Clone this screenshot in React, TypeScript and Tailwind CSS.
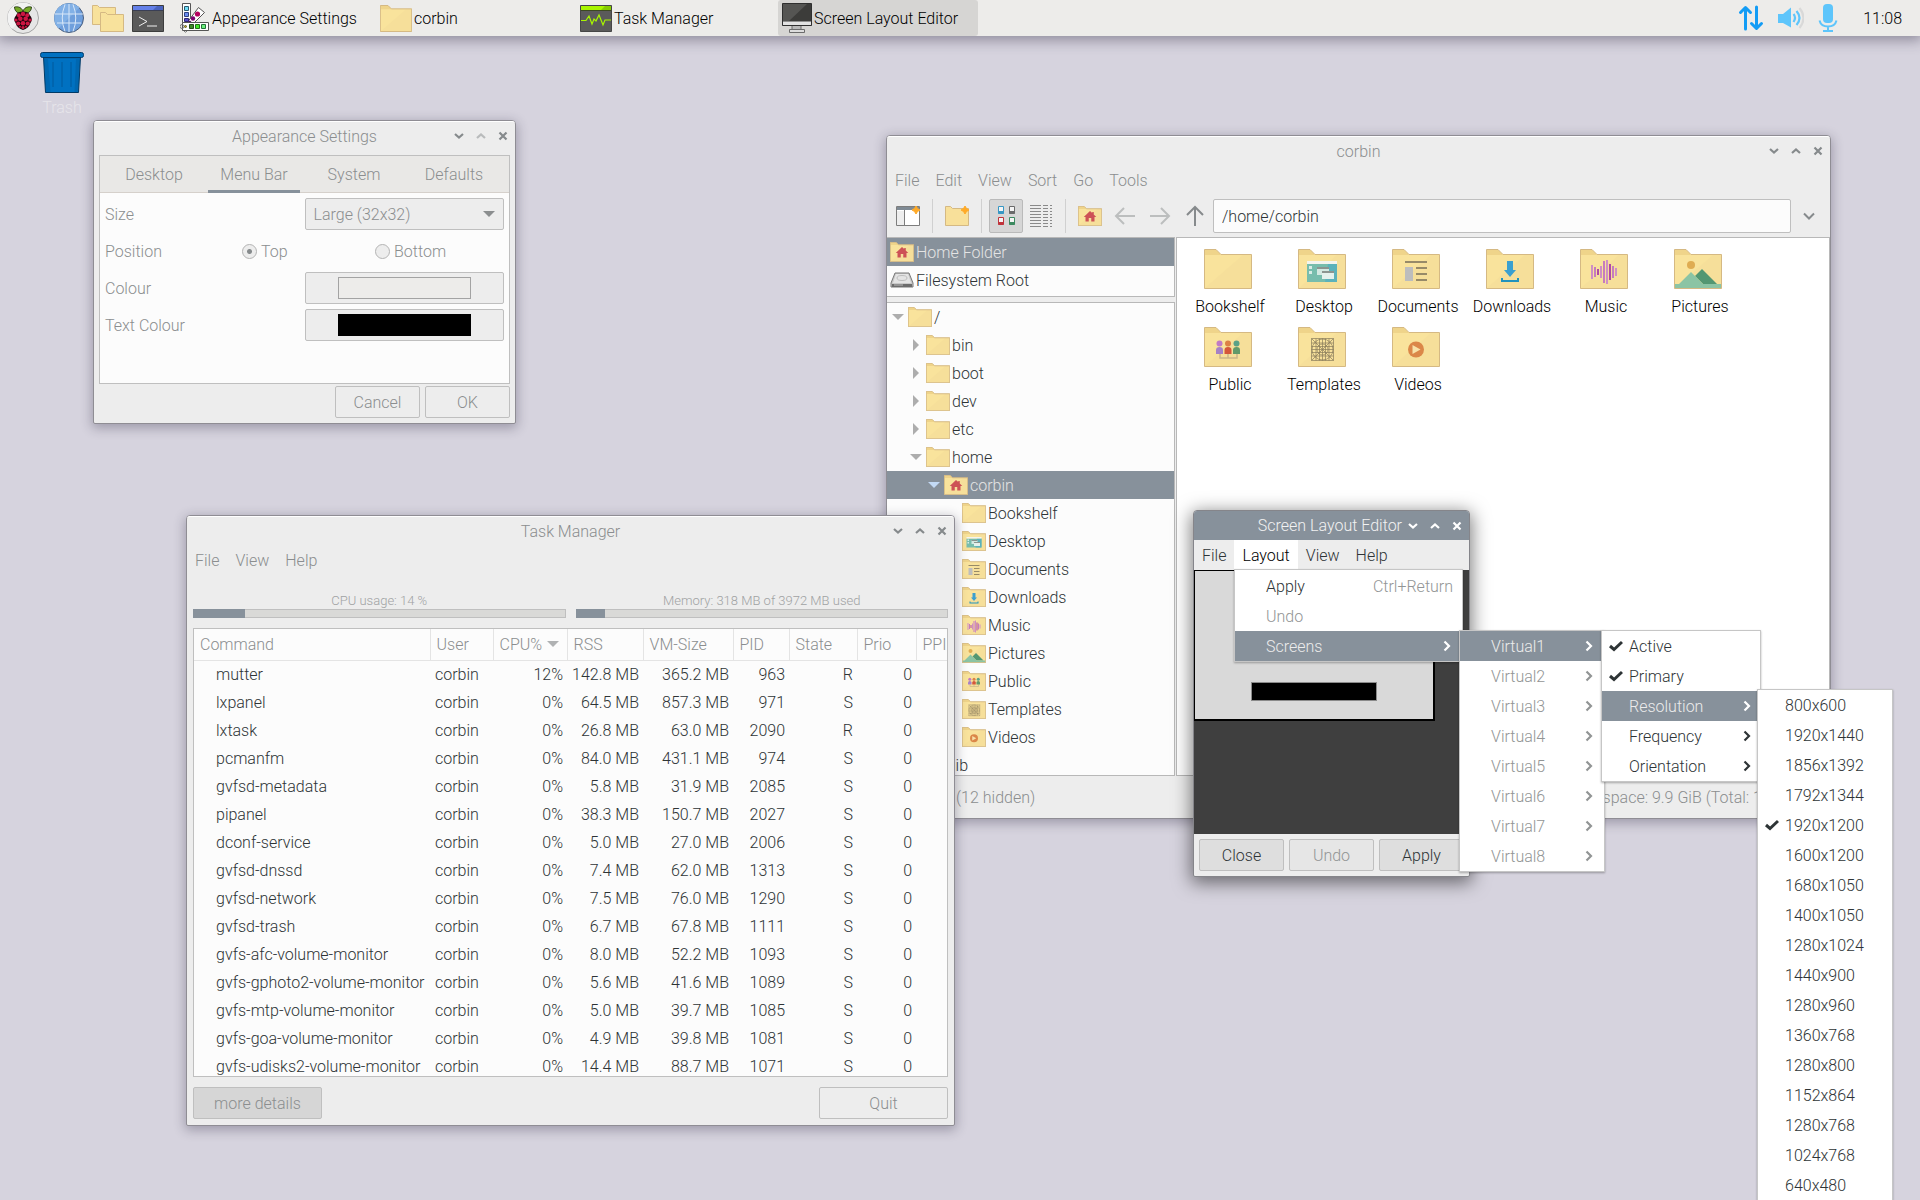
import type { ReactNode } from "react";
import clsx from "clsx";

type Emblem =
  | "home"
  | "desktop"
  | "documents"
  | "downloads"
  | "music"
  | "pictures"
  | "public"
  | "templates"
  | "videos";

const processes = [
  ["mutter", "12%", "142.8 MB", "365.2 MB", "963", "R"],
  ["lxpanel", "0%", "64.5 MB", "857.3 MB", "971", "S"],
  ["lxtask", "0%", "26.8 MB", "63.0 MB", "2090", "R"],
  ["pcmanfm", "0%", "84.0 MB", "431.1 MB", "974", "S"],
  ["gvfsd-metadata", "0%", "5.8 MB", "31.9 MB", "2085", "S"],
  ["pipanel", "0%", "38.3 MB", "150.7 MB", "2027", "S"],
  ["dconf-service", "0%", "5.0 MB", "27.0 MB", "2006", "S"],
  ["gvfsd-dnssd", "0%", "7.4 MB", "62.0 MB", "1313", "S"],
  ["gvfsd-network", "0%", "7.5 MB", "76.0 MB", "1290", "S"],
  ["gvfsd-trash", "0%", "6.7 MB", "67.8 MB", "1111", "S"],
  ["gvfs-afc-volume-monitor", "0%", "8.0 MB", "52.2 MB", "1093", "S"],
  ["gvfs-gphoto2-volume-monitor", "0%", "5.6 MB", "41.6 MB", "1089", "S"],
  ["gvfs-mtp-volume-monitor", "0%", "5.0 MB", "39.7 MB", "1085", "S"],
  ["gvfs-goa-volume-monitor", "0%", "4.9 MB", "39.8 MB", "1081", "S"],
  ["gvfs-udisks2-volume-monitor", "0%", "14.4 MB", "88.7 MB", "1071", "S"],
];

const homeFolders: { name: string; emblem?: Emblem }[] = [
  { name: "Bookshelf" },
  { name: "Desktop", emblem: "desktop" },
  { name: "Documents", emblem: "documents" },
  { name: "Downloads", emblem: "downloads" },
  { name: "Music", emblem: "music" },
  { name: "Pictures", emblem: "pictures" },
  { name: "Public", emblem: "public" },
  { name: "Templates", emblem: "templates" },
  { name: "Videos", emblem: "videos" },
];

const resolutions = [
  "800x600",
  "1920x1440",
  "1856x1392",
  "1792x1344",
  "1920x1200",
  "1600x1200",
  "1680x1050",
  "1400x1050",
  "1280x1024",
  "1440x900",
  "1280x960",
  "1360x768",
  "1280x800",
  "1152x864",
  "1280x768",
  "1024x768",
  "640x480",
];

function EmblemShape({ emblem }: { emblem: Emblem }) {
  switch (emblem) {
    case "home":
      return (
        <path
          d="M24 10l4.5 4V12h3v5l5 5h-3.500v9h-6.500v-7h-5v7H15v-9h-3.500z"
          fill="#cd5256"
        />
      );
    case "desktop":
      return (
        <g>
          <path d="M9 15h30v18H9z" fill="#77bdad" />
          <path d="M30 15h9v18H27z" fill="#5cb2bb" />
          <path d="M9 12h30v3H9z" fill="#f4f4ee" />
          <path d="M11 17h3v3h-3zM11 22h3v3h-3z" fill="#d9ece6" />
          <path d="M19 18h12v8H19z" fill="#d3e9e2" />
          <path d="M19 18h12v2H19z" fill="#8b9590" />
          <path d="M24 22h12v8H24z" fill="#e4f1ed" />
          <path d="M24 22h12v2H24z" fill="#8b9590" />
        </g>
      );
    case "documents":
      return (
        <g>
          <path d="M13 18h8v14h-8z" fill="#bdbdbd" />
          <path
            d="M13 12h22v2H13zM24 18h11v2H24zM24 24h11v2H24zM24 30h11v2H24z"
            fill="#978a68"
          />
        </g>
      );
    case "downloads":
      return (
        <g fill="#3ba0cf">
          <path d="M21 12h6v9h3l-6 7-6-7h3z" />
          <path d="M15 29h2v2h14v-2h2v4H15z" fill="#2193bd" />
        </g>
      );
    case "music":
      return (
        <g fill="#cf8fc4">
          <path d="M11 16h2v14h-2zM20 17h2v12h-2zM26 11h2v24h-2zM35 19h2v8h-2z" />
          <path
            d="M14 18h2v10h-2zM23 12h2v22h-2zM32 17h2v12h-2z"
            fill="#c77cbd"
          />
          <path d="M17 20h2v6h-2zM29 15h2v16h-2z" fill="#b04aa5" />
        </g>
      );
    case "pictures":
      return (
        <g>
          <circle cx="17" cy="16" r="4" fill="#dfac52" />
          <path d="M28 20l15 15H29l-8-8z" fill="#539772" />
          <path d="M17 23l12 12h18v4H1v-4h4z" fill="#8bc4a4" />
        </g>
      );
    case "public":
      return (
        <g>
          <path
            d="M16 27v4h17v-4M24 27v4"
            fill="none"
            stroke="#cbb789"
            strokeWidth="1.500"
          />
          <circle cx="15.500" cy="16.500" r="3" fill="#c07ac6" />
          <path d="M12 27v-4q0-3 3.500-3t3.500 3v4z" fill="#a681c6" />
          <circle cx="24" cy="16.500" r="3" fill="#dc8146" />
          <path d="M20.500 27v-4q0-3 3.500-3t3.500 3v4z" fill="#d5573a" />
          <circle cx="32.500" cy="16.500" r="3" fill="#5aa287" />
          <path d="M29 27v-4q0-3 3.500-3t3.500 3v4z" fill="#639a6a" />
        </g>
      );
    case "templates":
      return (
        <g fill="none" stroke="#8a7c5c" strokeWidth="0.700">
          <path d="M13.500 11.500h22v22h-22zM13.500 11.500l22 22M35.500 11.500l-22 22" />
          <path d="M13.500 16h22M13.500 19.500h22M13.500 22.500h22M13.500 25.500h22M13.500 29h22" />
          <path d="M18 11.500v22M21.500 11.500v22M24.500 11.500v22M27.500 11.500v22M31 11.500v22" />
          <circle cx="24.500" cy="22.500" r="10.500" />
          <circle cx="24.500" cy="22.500" r="5.500" />
        </g>
      );
    case "videos":
      return (
        <g>
          <circle cx="24" cy="22.500" r="8" fill="#db8748" />
          <path d="M20.500 18l8 4.500-8 4.500z" fill="#f8e2a8" />
        </g>
      );
  }
}

function Folder({
  emblem,
  className = "h-5 w-6",
}: {
  emblem?: Emblem;
  className?: string;
}) {
  return (
    <svg viewBox="0 0 48 40" className={clsx("shrink-0", className)}>
      <path d="M.5 39.500V.5H12l5 5h30.500v34z" fill="#f6df9a" />
      <path d="M1 39V6h38z" fill="#f9e39c" />
      <path d="M1 1h11l5 5H1z" fill="#efd48a" />
      {emblem && <EmblemShape emblem={emblem} />}
      <path
        d="M.5 39.500V.5H12l5 5h30.500v34z"
        fill="none"
        stroke="#d5b983"
        vectorEffect="non-scaling-stroke"
      />
    </svg>
  );
}

function RaspberryIcon() {
  return (
    <svg viewBox="0 0 32 32" className="size-8">
      <circle cx="16" cy="16" r="15.500" fill="#e6e6e6" stroke="#a5a5a5" />
      <path d="M5 27A15 15 0 0 1 27 5z" fill="#f2f2f2" />
      <path
        d="M16 9C14 4.500 10 4.500 7.500 5c0 3 2 6.500 7 6.500zM16 9c2-4.500 6-4.500 8.500-4 0 3-2 6.500-7 6.500z"
        fill="#75a928"
        stroke="#1b2a0b"
        strokeWidth=".8"
      />
      <path
        d="M16 9.500c4 0 6 1.500 7 4 2 2 2.500 5 .5 7.500-1 3.500-4 6-7.500 7-3.500-1-6.500-3.500-7.500-7-2-2.500-1.500-5.500.5-7.500 1-2.500 3-4 7-4z"
        fill="#23040d"
      />
      <g fill="#cd1543">
        <circle cx="16" cy="12" r="2.200" />
        <circle cx="11.800" cy="13.200" r="2" />
        <circle cx="20.200" cy="13.200" r="2" />
        <circle cx="13.300" cy="16.800" r="2.300" />
        <circle cx="18.700" cy="16.800" r="2.300" />
        <circle cx="9" cy="18" r="1.600" />
        <circle cx="23" cy="18" r="1.600" />
        <circle cx="16" cy="21.200" r="2.300" />
        <circle cx="11.300" cy="21.500" r="2" />
        <circle cx="20.700" cy="21.500" r="2" />
        <circle cx="16" cy="25.500" r="1.600" />
        <circle cx="13" cy="24.700" r="1" />
        <circle cx="19" cy="24.700" r="1" />
      </g>
    </svg>
  );
}

function GlobeIcon() {
  return (
    <svg viewBox="0 0 30 30" className="size-[30px]">
      <circle cx="15" cy="15" r="14.500" fill="#6f9fdc" stroke="#4c5f7c" />
      <path d="M4.500 25.500A14.500 14.500 0 0 1 25.500 4.500z" fill="#82b1e6" />
      <g fill="none" stroke="#d8e7f8">
        <path d="M15 1v28M1 11h28M3 20h24" />
        <path d="M11 1.500q-5.500 13.500 0 27M19 1.500q5.500 13.500 0 27" />
      </g>
    </svg>
  );
}

function TerminalIcon() {
  return (
    <svg viewBox="0 0 32 27" className="h-[27px] w-8">
      <path d="M.5.5h31v26H.5z" fill="#5a5a5a" stroke="#3d3d3d" />
      <path d="M1 1h30v4H1z" fill="#6480e8" />
      <path d="M25 1h6v4H21z" fill="#4a64c0" />
      <path d="M1 5.500h30" stroke="#3a3f55" />
      <path d="M7 12l8 4.500L7 21M15 21h10" fill="none" stroke="#f0f0f0" />
    </svg>
  );
}

function AppearanceIcon() {
  return (
    <svg viewBox="0 0 30 30" className="size-[30px]">
      <g stroke="#555" fill="#fff">
        <path d="M2.500.5h8v19h-8z" />
        <path d="M5 22.500L18.500 4.500l6 5L10 24z" />
        <path d="M2.500 19.500h26v8h-26z" />
      </g>
      <circle cx="2" cy="23.500" r="2" fill="none" stroke="#777" />
      <path d="M4 28q1.500 2.500 3 0" fill="none" stroke="#777" />
      <path d="M4.500 3.500h4v4h-4z" fill="#70dcf4" stroke="#285a70" />
      <path d="M4.500 9.500h4v4h-4z" fill="#6a8ef0" stroke="#2f3f80" />
      <path d="M4.500 15.500h4v3h-4z" fill="#5546c8" stroke="#2f2a70" />
      <circle cx="17.500" cy="11" r="2.600" fill="#b4005e" />
      <circle cx="13" cy="15.500" r="2.200" fill="#7c0070" />
      <path d="M8 19l2-1.500 1.500 1.500z" fill="#4b0060" />
      <circle cx="5.500" cy="23.500" r="1" fill="#c8a820" stroke="#5a5a20" />
      <path d="M9.500 21.500h4v4h-4z" fill="#3c8a28" stroke="#234b18" />
      <path d="M15.500 21.500h4v4h-4z" fill="#42e828" stroke="#237018" />
      <path d="M21.500 21.500h4v4h-4z" fill="#6cf07c" stroke="#237038" />
    </svg>
  );
}

function TaskManagerIcon() {
  return (
    <svg viewBox="0 0 32 27" className="h-[27px] w-8 shrink-0">
      <path d="M.5.5h31v26H.5z" fill="#5a5a5a" stroke="#464646" />
      <path d="M1 1h30v4H1z" fill="#a8f500" />
      <path d="M25 1h6v4H21z" fill="#86cc00" />
      <path d="M1 5.500h30" stroke="#3c4a20" />
      <path
        d="M1 15.500h5l3-4.500 3 8 2-5 2 2 3-6 4 10 2-5h6"
        fill="none"
        stroke="#a8f500"
        strokeWidth="1.200"
      />
    </svg>
  );
}

function MonitorIcon() {
  return (
    <svg viewBox="0 0 30 30" className="size-[30px] shrink-0">
      <path d="M10 22h9v5h-9z" fill="#b9b9b9" stroke="#6b6b6b" />
      <path d="M7.500 26.500h15v3h-15z" fill="#ddd" stroke="#6b6b6b" />
      <path d="M.5.5h29v22H.5z" fill="#3c3c3a" stroke="#2f2f2f" />
      <path d="M1 1h24L7 18H1z" fill="#555553" />
      <path d="M1 18.500h28V22H1z" fill="#e2e2e2" />
    </svg>
  );
}

function TrashIcon() {
  return (
    <svg viewBox="0 0 44 41" className="h-[41px] w-11">
      <path d="M3.500 5h37l-2 35.500h-33z" fill="#0067b0" stroke="#013a66" />
      <path d="M8 7h28l-1.500 33h-24z" fill="#0071c1" />
      <path d="M13 10v25M22 10v25M31 10v25" stroke="#005a9c" />
      <rect
        x=".5"
        y=".5"
        width="43"
        height="5"
        rx="2"
        fill="#0071c1"
        stroke="#013a66"
      />
    </svg>
  );
}

function DriveIcon() {
  return (
    <svg viewBox="0 0 24 20" className="h-5 w-6 shrink-0">
      <path d="M5 3h14l4 10v4H1v-4z" fill="#c9c9c9" stroke="#777" />
      <path d="M6 4h12l3 9H3z" fill="#e4e4e4" />
      <ellipse cx="12" cy="8" rx="5" ry="2.500" fill="none" stroke="#bdbdbd" />
      <path d="M2 14h20v3H2z" fill="#6d6d6d" />
      <path d="M4 15h9" stroke="#bbb" />
    </svg>
  );
}

function WindowButton({ kind, faded }: { kind: string; faded?: boolean }) {
  const paths: Record<string, string> = {
    Minimise: "M2 4l4 3.500L10 4",
    Maximise: "M2 8l4-3.500L10 8",
    Close: "M2.500 2.500l7 7M9.500 2.500l-7 7",
  };
  return (
    <button
      type="button"
      aria-label={kind}
      className={clsx("flex w-[22px] justify-center", faded && "opacity-50")}
    >
      <svg
        viewBox="0 0 12 12"
        className="size-3"
        fill="none"
        stroke="currentColor"
        strokeWidth="2.200"
      >
        <path d={paths[kind]} />
      </svg>
    </button>
  );
}

function Window({
  title,
  active,
  fixedSize,
  className,
  children,
}: {
  title: string;
  active?: boolean;
  fixedSize?: boolean;
  className: string;
  children: ReactNode;
}) {
  return (
    <section
      aria-label={title}
      className={clsx(
        "absolute flex flex-col rounded-t-[4px] rounded-b-[2px] border bg-[#ededed]",
        active
          ? "border-[#85858a] text-[#2e3436] shadow-[0_4px_18px_2px_rgba(0,0,0,0.5)]"
          : "border-[#8f8d94] text-[#8b8e8f] shadow-[0_3px_12px_1px_rgba(40,35,60,0.33)]",
        className
      )}
    >
      <header
        className={clsx(
          "grid h-[29px] shrink-0 grid-cols-[1fr_auto_1fr] items-center rounded-t-[3px]",
          active ? "bg-[#87919b] text-[#f2f2f2]" : "border-t border-white"
        )}
      >
        <h2 className="col-start-2">{title}</h2>
        <div
          className={clsx(
            "flex justify-end pr-px",
            active ? "text-white" : "text-[#868a8c]"
          )}
        >
          <WindowButton kind="Minimise" />
          <WindowButton kind="Maximise" faded={fixedSize} />
          <WindowButton kind="Close" />
        </div>
      </header>
      {children}
    </section>
  );
}

function MenuBar({ items, open }: { items: string[]; open?: string }) {
  return (
    <nav className="flex h-[30px] shrink-0">
      {items.map((item) => (
        <button
          key={item}
          type="button"
          className={clsx("px-2", item === open && "bg-white text-black")}
        >
          {item}
        </button>
      ))}
    </nav>
  );
}

function PushButton({
  className,
  children,
}: {
  className?: string;
  children: ReactNode;
}) {
  return (
    <button
      type="button"
      className={clsx(
        "h-8 rounded-[2px] border border-[#bfbfbf]",
        className
      )}
    >
      {children}
    </button>
  );
}

function MenuItem({
  label,
  hint,
  checked,
  submenu,
  selected,
  disabled,
  className = "pl-px pr-[9px]",
}: {
  label: string;
  hint?: string;
  checked?: boolean;
  submenu?: boolean;
  selected?: boolean;
  disabled?: boolean;
  className?: string;
}) {
  return (
    <li>
      <button
        type="button"
        className={clsx(
          "flex h-[30px] w-full items-center",
          selected && "bg-[#87919b] text-[#ececec]",
          disabled && "text-[#929595]",
          className
        )}
      >
        <span className="flex w-[26px] shrink-0 justify-center">
          {checked && (
            <svg
              viewBox="0 0 14 12"
              className="h-3 w-[14px]"
              fill="none"
              stroke="currentColor"
              strokeWidth="3"
            >
              <path d="M1 6l4 3.500L13 2" />
            </svg>
          )}
        </span>
        <span className="flex-1 text-left">{label}</span>
        {hint && <span className="text-[#929595]">{hint}</span>}
        {submenu && (
          <svg
            viewBox="0 0 8 12"
            className={clsx("h-3 w-2", selected && "text-white")}
            fill="none"
            stroke="currentColor"
            strokeWidth="2.200"
          >
            <path d="M1.500 1.500L6 6l-4.500 4.500" />
          </svg>
        )}
      </button>
    </li>
  );
}

function Menu({
  className,
  children,
}: {
  className: string;
  children: ReactNode;
}) {
  return (
    <ul
      className={clsx(
        "absolute border border-[#c6c6c6] bg-white text-[#2e3436] shadow-[0_1px_2px_rgba(0,0,0,0.3)]",
        className
      )}
    >
      {children}
    </ul>
  );
}

function TaskButton({
  icon,
  label,
  active,
}: {
  icon: ReactNode;
  label: string;
  active?: boolean;
}) {
  return (
    <button
      type="button"
      className={clsx(
        "flex h-9 w-[200px] items-center gap-0.5 rounded-[3px]",
        active ? "bg-[#d6d5d3] px-1" : "px-0.5"
      )}
    >
      {icon}
      <span>{label}</span>
    </button>
  );
}

function TopPanel() {
  return (
    <header className="absolute inset-x-0 top-0 flex h-9 items-center bg-[#edecea] text-black shadow-[0_2px_14px_2px_rgba(40,35,60,0.42)]">
      <div className="flex items-center gap-2 pl-[7px]">
        <button type="button" aria-label="Menu" className="mr-[7px]">
          <RaspberryIcon />
        </button>
        <button type="button" aria-label="Web Browser">
          <GlobeIcon />
        </button>
        <button type="button" aria-label="File Manager">
          <svg viewBox="0 0 32 27" className="h-[27px] w-8">
            <g fill="#f8e29c" stroke="#d5b983">
              <path d="M.5 19.500V.5h5l2 2h16v17z" />
              <path d="M8.500 26.500V7.500h5l2 2h16v17z" />
            </g>
          </svg>
        </button>
        <button type="button" aria-label="Terminal">
          <TerminalIcon />
        </button>
      </div>
      <div className="flex flex-1 pl-[14px]">
        <TaskButton icon={<AppearanceIcon />} label="Appearance Settings" />
        <TaskButton icon={<Folder className="h-[27px] w-8" />} label="corbin" />
        <TaskButton icon={<TaskManagerIcon />} label="Task Manager" />
        <TaskButton
          icon={<MonitorIcon />}
          label="Screen Layout Editor"
          active
        />
      </div>
      <div className="flex items-center gap-3.5 pr-[18px]">
        <svg
          viewBox="0 0 26 26"
          className="size-[26px]"
          fill="none"
          stroke="#139cf5"
          strokeWidth="3"
          strokeLinecap="round"
          strokeLinejoin="round"
        >
          <path d="M7.500 24V3M2.500 7.500L7.500 2.500l5 5" />
          <path d="M18.500 2v21M13.500 18.500l5 5 5-5" />
        </svg>
        <svg viewBox="0 0 26 26" className="size-[26px]" fill="none">
          <path d="M0 9h5l8-6.500v20L5 18H0z" fill="#5ec5fb" />
          <g strokeWidth="2.200">
            <path d="M15.500 9q3 3.500 0 8" stroke="#5ec5fb" />
            <path d="M18.500 6q6 7 0 14" stroke="#5ec5fb" />
            <path d="M21.500 3q8 10 0 20" stroke="#d9d9d9" />
          </g>
        </svg>
        <svg viewBox="0 0 20 28" className="h-7 w-5" fill="none">
          <rect x="5" y="0" width="10" height="19" rx="4" fill="#5ec5fb" />
          <path
            d="M1.500 16.500q1.500 6 8.500 6t8.500-6M10 22.500V27M5 27h10"
            stroke="#5ec5fb"
            strokeWidth="2"
          />
        </svg>
        <time className="pl-[11px]">11:08</time>
      </div>
    </header>
  );
}

function AppearanceSettings() {
  return (
    <Window
      title="Appearance Settings"
      fixedSize
      className="left-[93px] top-[120px] w-[423px] h-[304px]"
    >
      <div className="flex flex-1 flex-col justify-between p-[5px]">
        <div className="h-[229px] border border-[#bfbfbf] bg-[#fcfcfc]">
          <div className="box-content grid h-9 grid-cols-[repeat(4,92px)] gap-2 border-b border-[#d5d0cb] bg-[#e9e8e6] pl-2">
            {["Desktop", "Menu Bar", "System", "Defaults"].map((tab) => (
              <button
                key={tab}
                type="button"
                className={clsx(
                  "-mb-px border-b-3 pt-[3px] leading-6",
                  tab === "Menu Bar" ? "border-[#87919b]" : "border-transparent"
                )}
              >
                {tab}
              </button>
            ))}
          </div>
          <form className="flex flex-col gap-[5px] p-[5px]">
            <div className="grid h-8 grid-cols-2 items-center">
              <label htmlFor="size">Size</label>
              <div className="relative flex items-center">
                <select
                  id="size"
                  className="h-8 w-full appearance-none rounded-[2px] border border-[#bfbfbf] bg-[#ededed] px-2"
                >
                  <option>Large (32x32)</option>
                </select>
                <svg
                  viewBox="0 0 12 6"
                  className="pointer-events-none absolute right-[9px] h-1.5 w-3"
                >
                  <path d="M0 0h12L6 6z" fill="#8b8e8f" />
                </svg>
              </div>
            </div>
            <div className="grid h-8 grid-cols-3 items-center">
              <span>Position</span>
              {["Top", "Bottom"].map((side) => (
                <label key={side} className="flex items-center gap-1 pl-1">
                  <input
                    type="radio"
                    name="position"
                    defaultChecked={side === "Top"}
                    className="size-[15px] appearance-none rounded-full border border-[#b4b4b4] bg-[#ededed] checked:bg-[radial-gradient(circle,#868a8c_2px,#ededed_3px)]"
                  />
                  {side}
                </label>
              ))}
            </div>
            <div className="grid h-8 grid-cols-2 items-center">
              <label htmlFor="colour">Colour</label>
              <button
                id="colour"
                type="button"
                className="flex h-8 items-center justify-center rounded-[2px] border border-[#bfbfbf] bg-[#ededed]"
              >
                <span className="h-[22px] w-[133px] border border-[#a3a3a3] bg-[#edecea]" />
              </button>
            </div>
            <div className="grid h-8 grid-cols-2 items-center">
              <label htmlFor="text-colour">Text Colour</label>
              <button
                id="text-colour"
                type="button"
                className="flex h-8 items-center justify-center rounded-[2px] border border-[#bfbfbf] bg-[#ededed]"
              >
                <span className="h-[22px] w-[133px] bg-black" />
              </button>
            </div>
          </form>
        </div>
        <div className="flex justify-end gap-[5px]">
          <PushButton className="w-[85px]">Cancel</PushButton>
          <PushButton className="w-[85px]">OK</PushButton>
        </div>
      </div>
    </Window>
  );
}

function ToolButton({
  label,
  pressed,
  children,
}: {
  label: string;
  pressed?: boolean;
  children: ReactNode;
}) {
  return (
    <button
      type="button"
      aria-label={label}
      className={clsx(
        "flex size-[34px] shrink-0 items-center justify-center rounded-[2px]",
        pressed && "border border-[#bababa] bg-[#d6d6d6]"
      )}
    >
      {children}
    </button>
  );
}

function ToolSeparator() {
  return <div className="mx-1.5 h-[34px] w-px shrink-0 bg-[#d0d0d0]" />;
}

function NavArrow({ d, className }: { d: string; className: string }) {
  return (
    <svg
      viewBox="0 0 24 24"
      className={clsx("size-6", className)}
      fill="none"
      stroke="currentColor"
      strokeWidth="2"
    >
      <path d={d} />
    </svg>
  );
}

function NewBadge() {
  return (
    <path
      d="M20 0l1.500 2.500L24 4l-2.500 1.500L20 8l-1.500-2.500L16 4l2.500-1.500z"
      fill="#ffaa28"
      stroke="#ffaa28"
    />
  );
}

function TreeRow({
  name,
  emblem,
  depth,
  state,
  selected,
}: {
  name: string;
  emblem?: Emblem;
  depth: number;
  state?: "open" | "closed";
  selected?: boolean;
}) {
  return (
    <li
      className={clsx(
        "flex h-7 items-center",
        selected && "bg-[#87919b] text-[#e4e4e4]"
      )}
      style={{ paddingLeft: 3 + depth * 18 }}
    >
      <span className="flex w-[18px] shrink-0 pl-0.5">
        {state && (
          <svg
            viewBox="0 0 12 12"
            className={clsx(
              "size-3",
              selected ? "text-[#c3daf5]" : "text-[#adadad]"
            )}
            fill="currentColor"
          >
            <path d={state === "open" ? "M0 3h12L6 9z" : "M3 0l6 6-6 6z"} />
          </svg>
        )}
      </span>
      <Folder emblem={emblem} />
      <span className="pl-0.5">{name}</span>
    </li>
  );
}

function FileManager() {
  return (
    <Window
      title="corbin"
      className="left-[886px] top-[135px] w-[945px] h-[684px]"
    >
      <MenuBar items={["File", "Edit", "View", "Sort", "Go", "Tools"]} />
      <div className="flex items-center gap-px px-1 py-1">
        <ToolButton label="New Window">
          <svg viewBox="0 0 24 20" className="h-5 w-6">
            <path d="M.5.5h23v19H.5z" fill="#fff" stroke="#7d7d7d" />
            <path d="M1 1h22v3H1z" fill="#7f8a94" />
            <path d="M1 5h7v14H1z" fill="#eee" />
            <path d="M8.500 4v15" stroke="#7d7d7d" />
            <NewBadge />
          </svg>
        </ToolButton>
        <ToolSeparator />
        <ToolButton label="New Folder">
          <svg viewBox="0 0 24 20" className="h-5 w-6">
            <path
              d="M.5 19.500V.5h5l2 2h16v17z"
              fill="#f8e09a"
              stroke="#d5b983"
            />
            <NewBadge />
          </svg>
        </ToolButton>
        <ToolSeparator />
        <ToolButton label="Icons" pressed>
          <svg viewBox="0 0 19 22" className="h-[22px] w-[19px]" fill="#f4f4f4">
            <path d="M1.500 1.500h5v7h-5z" stroke="#3797c4" />
            <path d="M1.500 6h5v3h-5z" fill="#3797c4" />
            <path d="M12.500 1.500h5v7h-5z" stroke="#6a6a6a" />
            <path d="M12.500 6h5v3h-5z" fill="#6a6a6a" />
            <path d="M1.500 12.500h5v7h-5z" stroke="#c0343c" />
            <path d="M1.500 17h5v3h-5z" fill="#c0343c" />
            <path d="M12.500 12.500h5v7h-5z" stroke="#3d8a60" />
            <path d="M12.500 17h5v3h-5z" fill="#3d8a60" />
          </svg>
        </ToolButton>
        <ToolButton label="List">
          <svg viewBox="0 0 22 24" className="h-6 w-[22px]" stroke="#8a8a8a">
            <path d="M0 1.500h11M0 4.500h11M0 7.500h11M0 10.500h11M0 13.500h11M0 16.500h11M0 19.500h11M0 22.500h11" />
            <path d="M13 1.500h5M13 4.500h5M13 7.500h5M13 10.500h5M13 13.500h5M13 16.500h5M13 19.500h5M13 22.500h5" />
            <path d="M20 1.500h2M20 4.500h2M20 7.500h2M20 10.500h2M20 13.500h2M20 16.500h2M20 19.500h2M20 22.500h2" />
          </svg>
        </ToolButton>
        <ToolSeparator />
        <ToolButton label="Home">
          <Folder emblem="home" />
        </ToolButton>
        <ToolButton label="Back">
          <NavArrow d="M11 4l-8 8 8 8M3 12h19" className="text-[#bcbebe]" />
        </ToolButton>
        <ToolButton label="Forward">
          <NavArrow d="M13 4l8 8-8 8M21 12H2" className="text-[#bcbebe]" />
        </ToolButton>
        <ToolButton label="Up">
          <NavArrow d="M4 11l8-8 8 8M12 3v19" className="text-[#868a8c]" />
        </ToolButton>
        <input
          aria-label="Path"
          defaultValue="/home/corbin"
          className="h-[34px] min-w-0 flex-1 rounded-[2px] border border-[#bfbfbf] bg-[#fcfcfc] px-2 leading-6 text-[#2e3436]"
        />
        <button
          type="button"
          aria-label="History"
          className="flex w-[34px] justify-center"
        >
          <svg
            viewBox="0 0 12 8"
            className="h-2 w-3"
            fill="none"
            stroke="#868a8c"
            strokeWidth="2"
          >
            <path d="M1 1.500l5 5 5-5" />
          </svg>
        </button>
      </div>
      <div className="flex min-h-0 flex-1 gap-px text-[#2e3436]">
        <div className="flex w-[288px] flex-col gap-[5px]">
          <ul className="h-[60px] shrink-0 border-y border-r border-[#b8b8b8] bg-[#fcfcfc]">
            <li className="flex h-7 items-center gap-0.5 bg-[#87919b] pl-[3px] text-[#e4e4e4]">
              <Folder emblem="home" />
              Home Folder
            </li>
            <li className="flex h-7 items-center gap-0.5 pl-[3px]">
              <DriveIcon />
              Filesystem Root
            </li>
          </ul>
          <ul className="min-h-0 flex-1 overflow-hidden border-y border-r border-[#b8b8b8] bg-[#fcfcfc]">
            <TreeRow name="/" depth={0} state="open" />
            <TreeRow name="bin" depth={1} state="closed" />
            <TreeRow name="boot" depth={1} state="closed" />
            <TreeRow name="dev" depth={1} state="closed" />
            <TreeRow name="etc" depth={1} state="closed" />
            <TreeRow name="home" depth={1} state="open" />
            <TreeRow
              name="corbin"
              emblem="home"
              depth={2}
              state="open"
              selected
            />
            {homeFolders.map((folder) => (
              <TreeRow key={folder.name} {...folder} depth={3} />
            ))}
            <TreeRow name="lib" depth={1} state="closed" />
          </ul>
        </div>
        <div className="flex-1 border border-[#b8b8b8] bg-white pl-1 pt-[11px] text-black">
          <ul className="grid grid-cols-[repeat(6,94px)]">
            {homeFolders.map((folder) => (
              <li
                key={folder.name}
                className="flex h-[78px] flex-col items-center"
              >
                <Folder emblem={folder.emblem} className="h-10 w-12" />
                <span className="pl-1 pt-[5px]">{folder.name}</span>
              </li>
            ))}
          </ul>
        </div>
      </div>
      <footer className="flex h-[42px] shrink-0 items-center justify-between px-[13px]">
        <span>9 items (12 hidden)</span>
        <span>Free space: 9.9 GiB (Total: 14.2 GiB)</span>
      </footer>
    </Window>
  );
}

function UsageBar({ label, percent }: { label: string; percent: number }) {
  return (
    <div className="flex flex-1 flex-col">
      <span className="text-center text-[13px] leading-4 text-[#a0a2a3]">
        {label}
      </span>
      <div
        role="progressbar"
        aria-label={label}
        aria-valuenow={percent}
        className="relative h-[9px] border border-[#bfbfbf] bg-[#d9d9d7]"
      >
        <div
          className="absolute -left-px -top-px h-[9px] bg-[#87919b]"
          style={{ width: `${percent}%` }}
        />
      </div>
    </div>
  );
}

function TaskManager() {
  return (
    <Window
      title="Task Manager"
      className="left-[186px] top-[515px] w-[769px] h-[611px]"
    >
      <MenuBar items={["File", "View", "Help"]} />
      <div className="flex min-h-0 flex-1 flex-col gap-2.5 px-1.5 pb-1.5 pt-[18px]">
        <div className="flex gap-2.5">
          <UsageBar label="CPU usage: 14 %" percent={14} />
          <UsageBar label="Memory: 318 MB of 3972 MB used" percent={8} />
        </div>
        <div className="min-h-0 flex-1 overflow-hidden border border-[#bfbfbf] bg-[#fcfcfc]">
          <table className="w-full table-fixed border-collapse whitespace-nowrap">
            <colgroup>
              <col className="w-[236px]" />
              <col className="w-[63px]" />
              <col className="w-[74px]" />
              <col className="w-[76px]" />
              <col className="w-[90px]" />
              <col className="w-[56px]" />
              <col className="w-[68px]" />
              <col className="w-[59px]" />
              <col />
            </colgroup>
            <thead>
              <tr className="h-[31px] text-left">
                {[
                  "Command",
                  "User",
                  "CPU%",
                  "RSS",
                  "VM-Size",
                  "PID",
                  "State",
                  "Prio",
                  "PPID",
                ].map((name) => (
                  <th
                    key={name}
                    className="overflow-hidden border-b border-r border-[#e4e4e4] p-0 pl-1.5 font-light last:border-r-0"
                  >
                    {name === "CPU%" ? (
                      <span className="flex items-center gap-[5px]">
                        {name}
                        <svg viewBox="0 0 12 6" className="h-1.5 w-3">
                          <path d="M0 0h12L6 6z" fill="#b0b2b3" />
                        </svg>
                      </span>
                    ) : (
                      name
                    )}
                  </th>
                ))}
              </tr>
            </thead>
            <tbody className="text-right text-[#2e3436]">
              {processes.map(([command, cpu, rss, vm, pid, state]) => (
                <tr key={pid} className="h-7">
                  <td className="p-0 pl-[22px] text-left">{command}</td>
                  <td className="p-0 pl-[5px] text-left">corbin</td>
                  <td className="p-0 pr-1">{cpu}</td>
                  <td className="p-0 pr-1">{rss}</td>
                  <td className="p-0 pr-1">{vm}</td>
                  <td className="p-0 pr-1">{pid}</td>
                  <td className="p-0 pr-1">{state}</td>
                  <td className="p-0 pr-1">0</td>
                  <td className="p-0" />
                </tr>
              ))}
            </tbody>
          </table>
        </div>
        <div className="flex justify-between">
          <PushButton className="w-[129px] bg-[#d6d6d6]">
            more details
          </PushButton>
          <PushButton className="w-[129px]">Quit</PushButton>
        </div>
      </div>
    </Window>
  );
}

function ScreenLayoutEditor() {
  return (
    <Window
      title="Screen Layout Editor"
      active
      className="left-[1193px] top-[510px] w-[277px] h-[367px]"
    >
      <MenuBar items={["File", "Layout", "View", "Help"]} open="Layout" />
      <div className="flex-1 bg-[#3f3f3f]">
        <div className="flex h-[151px] w-[241px] items-end justify-center border-b-2 border-l border-r-2 border-t border-black bg-[#d9d9d9] pb-[18px]">
          <div className="h-[19px] w-[126px] border border-[#8a8a8a] bg-black" />
        </div>
      </div>
      <div className="flex gap-[5px] p-[5px]">
        <PushButton className="flex-1 bg-[#dedede]">Close</PushButton>
        <PushButton className="flex-1 bg-[#e6e6e6] text-[#929595]">
          Undo
        </PushButton>
        <PushButton className="flex-1 bg-[#dedede]">Apply</PushButton>
      </div>
    </Window>
  );
}

function LayoutMenus() {
  return (
    <div>
      <Menu className="left-[1234px] top-[569px] w-[229px] pt-px">
        <MenuItem
          label="Apply"
          hint="Ctrl+Return"
          className="pl-[5px] pr-[9px]"
        />
        <MenuItem label="Undo" disabled className="pl-[5px]" />
        <MenuItem
          label="Screens"
          submenu
          selected
          className="pl-[5px] pr-[11px]"
        />
      </Menu>
      <Menu className="left-[1459px] top-[630px] w-[146px]">
        {[1, 2, 3, 4, 5, 6, 7, 8].map((n) => (
          <MenuItem
            key={n}
            label={`Virtual${n}`}
            submenu
            selected={n === 1}
            disabled={n > 1}
            className="pl-[5px] pr-[11px]"
          />
        ))}
      </Menu>
      <Menu className="left-[1601px] top-[630px] w-[160px]">
        <MenuItem label="Active" checked />
        <MenuItem label="Primary" checked />
        <MenuItem label="Resolution" submenu selected />
        <MenuItem label="Frequency" submenu />
        <MenuItem label="Orientation" submenu />
      </Menu>
      <Menu className="left-[1757px] top-[689px] w-[136px]">
        {resolutions.map((resolution) => (
          <MenuItem
            key={resolution}
            label={resolution}
            checked={resolution === "1920x1200"}
          />
        ))}
      </Menu>
    </div>
  );
}

export default function App() {
  return (
    <main className="relative h-screen w-full overflow-hidden bg-[#d6d3de] font-['Roboto',sans-serif] text-[16px] leading-[25px] font-light">
      <TopPanel />
      <button
        type="button"
        className="absolute left-[40px] top-[52px] flex flex-col items-center gap-0.5 text-[#e6e5ea]"
      >
        <TrashIcon />
        Trash
      </button>
      <AppearanceSettings />
      <FileManager />
      <TaskManager />
      <ScreenLayoutEditor />
      <LayoutMenus />
    </main>
  );
}
